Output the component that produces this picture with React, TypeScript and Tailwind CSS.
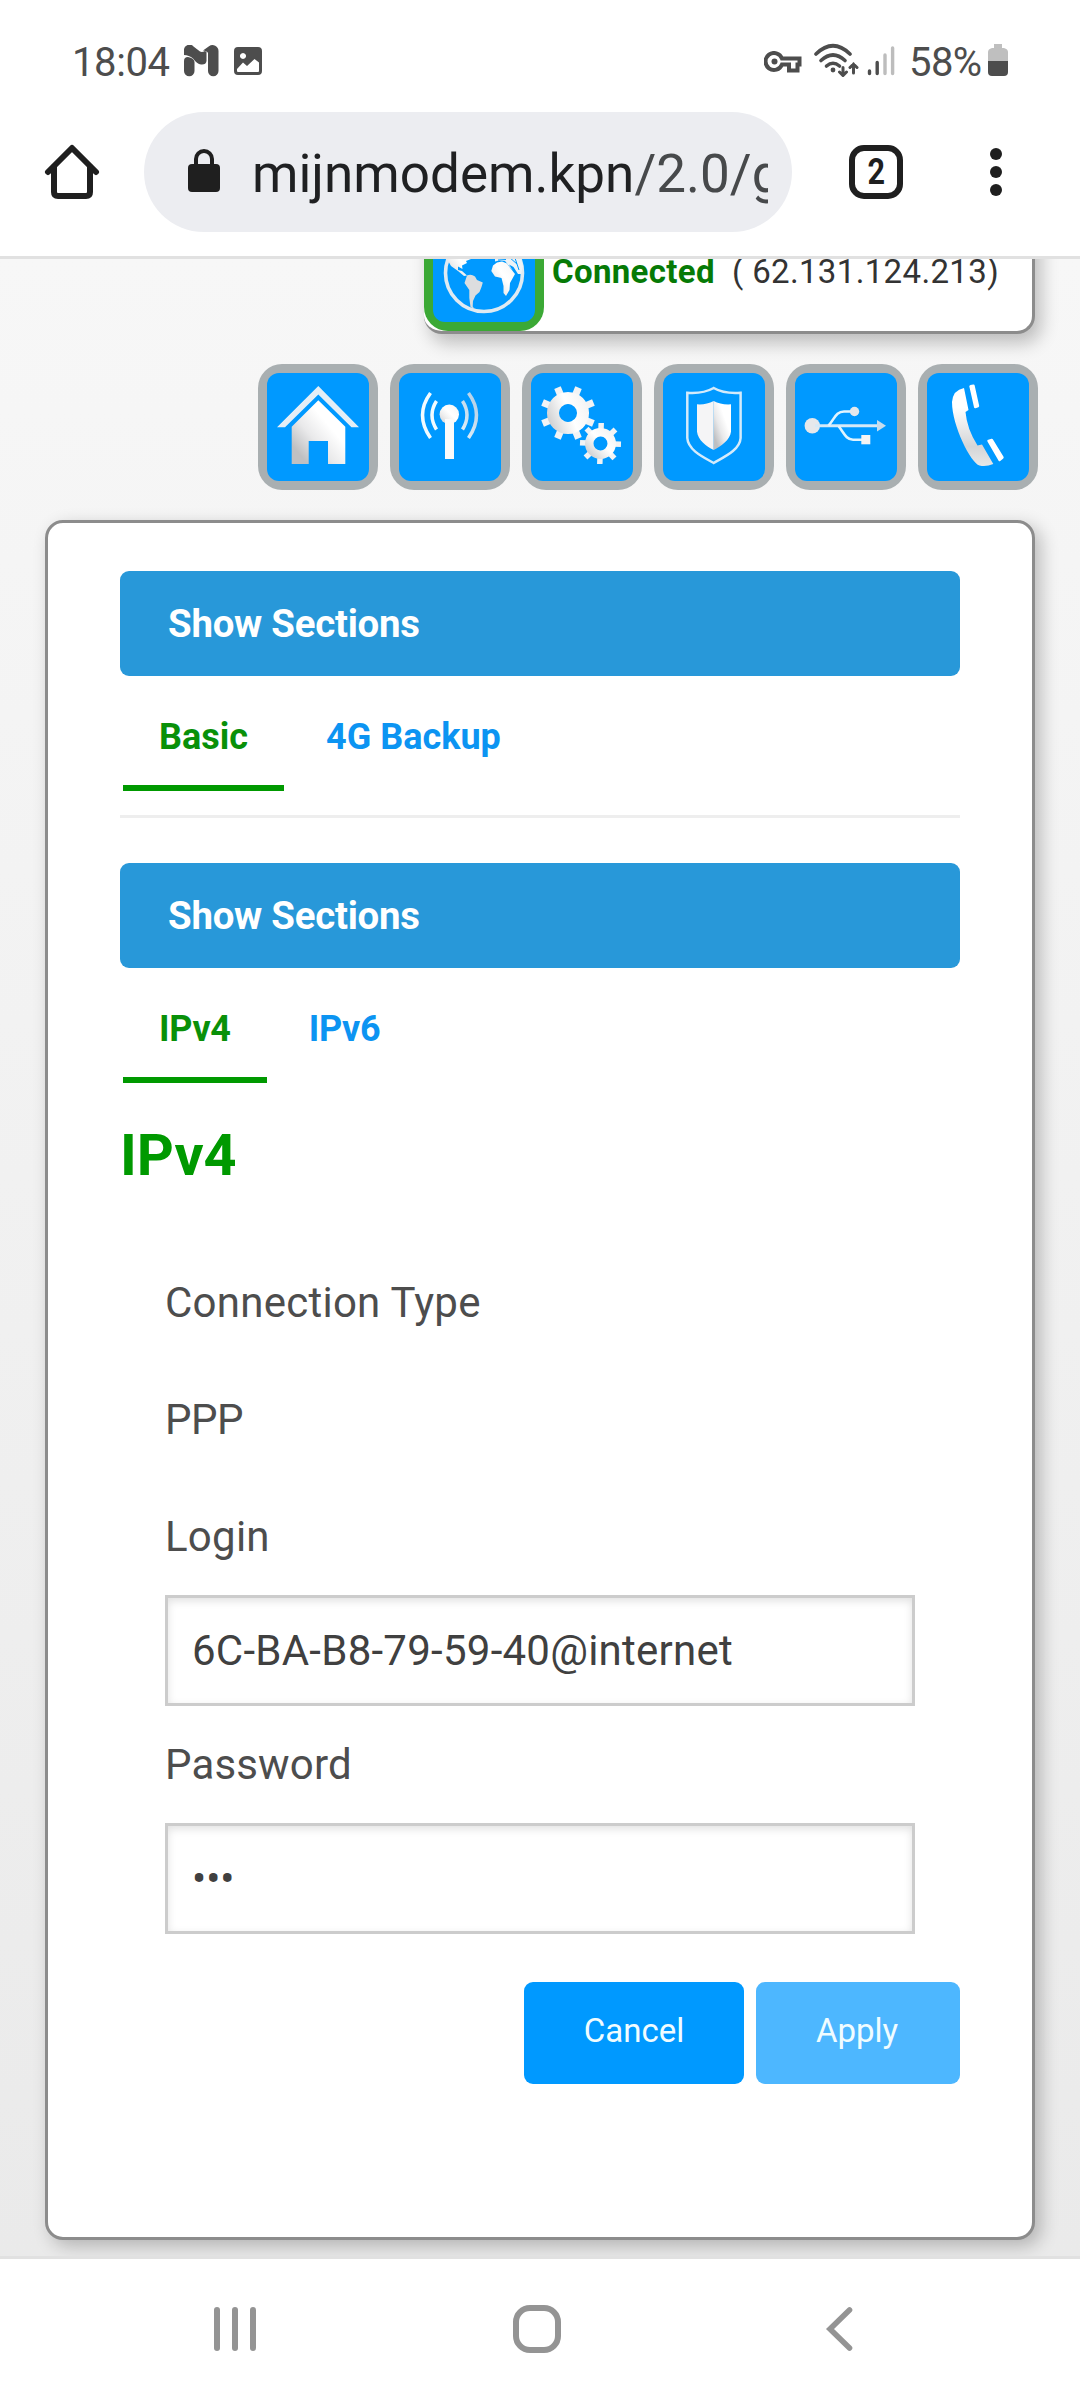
import clsx from "clsx";
import type { ReactNode } from "react";

type Tab = { label: string; active?: boolean };

function StatusBar() {
    return (
        <div className="flex h-[88px] items-start justify-between pl-[72px] pr-[72px] text-[#4d4d4d]">
            <div className="flex h-[88px] items-start">
                <span className="mt-[39px] w-[112px] text-[40px] leading-[48px] tracking-[-0.4px]">18:04</span>
                <svg className="mt-[45px]" width="36" height="32" viewBox="0 0 36 32" fill="currentColor">
                    <path d="M0 16Q0 12 4 12Q10 13 10.500 17V26A5.200 5.200 0 0 1 0 26Z" />
                    <path d="M0 10V6A5.500 5.500 0 0 1 9.500 1.500L16 6.500Q18 7.500 21 6L22.500 7V16Q22 20 17 19.500Q13 19 9 13.500Q5 10 0 10Z" />
                    <path d="M19 5.500L25 1.200A6 6 0 0 1 34.500 6V26A5.200 5.200 0 0 1 24 26V8Q23 6 19 5.500Z" />
                </svg>
                <svg className="ml-[14px] mt-[47px]" width="28" height="28" viewBox="0 0 28 28">
                    <path
                        fill="currentColor"
                        fillRule="evenodd"
                        d="M4 0H24Q28 0 28 4V24Q28 28 24 28H4Q0 28 0 24V4Q0 0 4 0ZM3 22V24Q3 25 4 25H24Q25 25 25 24V15.500L20.500 12L13 19L9 15.500ZM9 6A3 3 0 1 0 9.010 6Z"
                    />
                </svg>
            </div>
            <div className="flex h-[88px] items-start">
                <svg className="mt-[51px]" width="38" height="22" viewBox="0 0 38 22" fill="none" stroke="currentColor" strokeWidth="4">
                    <path d="M18 7.500H35.500V13.500H33.500V19.500H25V13.500H18A8.500 8.500 0 1 1 18 7.500Z" />
                    <circle cx="10.500" cy="10.500" r="3" fill="currentColor" stroke="none" />
                </svg>
                <svg className="ml-[12px] mt-[43px]" width="45" height="34" viewBox="0 0 45 34" fill="none" stroke="currentColor" strokeWidth="3.600" strokeLinecap="round">
                    <path d="M2 11Q19 -5.500 36 11" />
                    <path d="M7 17.500Q19 6.500 31 17.500" />
                    <path d="M12.500 23Q19 17.500 25.500 23" />
                    <circle cx="19" cy="27" r="2.400" fill="currentColor" stroke="none" />
                    <path d="M29 24.500V32M25.500 29L29 32.500L32.500 29" strokeWidth="3" />
                    <path d="M39.500 30V21M36 24.500L39.500 21L43 24.500" strokeWidth="3" />
                </svg>
                <svg className="ml-[8px] mt-[45px]" width="28" height="31" viewBox="0 0 28 31" strokeWidth="3.400" strokeLinecap="round">
                    <path d="M2.500 26V28.500M10.200 17.500V28.500" stroke="#4d4d4d" />
                    <path d="M18 10V28.500M25.600 3V28.500" stroke="#bdbdbd" />
                </svg>
                <span className="ml-[14px] mt-[39px] w-[79px] whitespace-nowrap text-[40px] leading-[48px] tracking-[-0.6px]">58%</span>
                <svg className="mt-[44px]" width="20" height="32" viewBox="0 0 20 32">
                    <path d="M6 0H14V4H16Q20 5 20 8V17H0V8Q0 5 4 4H6Z" fill="#bfbfbf" />
                    <path d="M0 17H20V28Q20 32 16 32H4Q0 32 0 28Z" fill="#4d4d4d" />
                </svg>
            </div>
        </div>
    );
}

function AddressBar() {
    return (
        <div className="flex h-[168px] items-start pl-[44px] text-[#1f1f1f]">
            <svg className="mt-[56px]" width="56" height="56" viewBox="0 0 56 56" fill="none" stroke="currentColor" strokeWidth="6" strokeLinecap="round" strokeLinejoin="round">
                <path d="M4 28L28 4L52 28" />
                <path d="M10 23V48Q10 52 14 52H42Q46 52 46 48V23" />
            </svg>
            <div className="ml-[44px] mt-[24px] flex h-[120px] w-[648px] rounded-full bg-[#ecedf1]">
                <svg className="ml-[44px] mt-[37px]" width="32" height="43" viewBox="0 0 32 43">
                    <path d="M8 16V10A8 8 0 0 1 24 10V16" fill="none" stroke="currentColor" strokeWidth="4" />
                    <rect y="15" width="32" height="28" rx="4" fill="currentColor" />
                </svg>
                <div className="ml-[32px] mt-[31px] w-[516px] overflow-hidden whitespace-nowrap text-[53px] leading-[62px] text-[#1f2022]">
                    mijnmodem.kpn<span className="text-[#47494b]">/2.0/g</span>
                </div>
            </div>
            <div className="ml-[57px] mt-[57px] flex h-[54px] w-[54px] items-center justify-center rounded-[15px] border-[6px] border-[#1f1f1f] text-[36px] leading-none font-bold">
                <span className="scale-x-85">2</span>
            </div>
            <div className="ml-[87px] mt-[60px] flex flex-col gap-1.5">
                {[0, 1, 2].map((dot) => (
                    <span key={dot} className="h-3 w-3 rounded-full bg-[#1f1f1f]" />
                ))}
            </div>
        </div>
    );
}

function Gear({ x, y, body, outer, hole, tooth, turn }: { x: number; y: number; body: number; outer: number; hole: number; tooth: number; turn: number }) {
    return (
        <g transform={`translate(${x} ${y}) rotate(${turn})`}>
            {[0, 45, 90, 135, 180, 225, 270, 315].map((angle) => (
                <rect key={angle} x={-tooth / 2} y={-outer} width={tooth} height={outer - body + 3} transform={`rotate(${angle})`} fill="#f1f3f5" />
            ))}
            <circle r={(body + hole) / 2} fill="none" stroke="url(#silver)" strokeWidth={body - hole} />
        </g>
    );
}

function IconTile({ children, connected }: { children: ReactNode; connected?: boolean }) {
    return (
        <div className={clsx("h-[126px] w-[120px] shrink-0 overflow-hidden rounded-[24px] p-[9px]", connected ? "bg-[#3ba935]" : "bg-[#a9afb1]")}>
            <svg className="rounded-[12px] bg-[#0099ff]" width="102" height="108" viewBox="0 0 102 108" fill="url(#silver)">
                {children}
            </svg>
        </div>
    );
}

function Gradients() {
    return (
        <svg className="absolute h-0 w-0">
            <defs>
                <linearGradient id="silver" x1="1" y1="0" x2="0" y2="1">
                    <stop offset="0" stopColor="#f4f4f4" />
                    <stop offset="0.450" stopColor="#ffffff" />
                    <stop offset="0.650" stopColor="#f0f0f0" />
                    <stop offset="1" stopColor="#cfd0d2" />
                </linearGradient>
                <linearGradient id="house" x1="1" y1="0" x2="0" y2="1">
                    <stop offset="0.350" stopColor="#ffffff" />
                    <stop offset="0.600" stopColor="#e9e9ea" />
                    <stop offset="0.850" stopColor="#bfc0c2" />
                </linearGradient>
                <linearGradient id="handset" x1="0" y1="0" x2="0" y2="1">
                    <stop offset="0.250" stopColor="#ffffff" />
                    <stop offset="0.750" stopColor="#d4d5d7" />
                    <stop offset="1" stopColor="#e8e8e8" />
                </linearGradient>
                <linearGradient id="waves" gradientUnits="userSpaceOnUse" x1="22" y1="60" x2="80" y2="30">
                    <stop offset="0.400" stopColor="#f2fbff" />
                    <stop offset="1" stopColor="#b4cfe6" />
                </linearGradient>
            </defs>
        </svg>
    );
}

function ConnectionStatus() {
    return (
        <div className="-mt-[54px] ml-[424px] flex h-[129px] w-[611px] shrink-0 rounded-[18px] border-r-[3px] border-b-[3px] border-[#8c8c8c] bg-white shadow-[6px_9px_18px_rgba(0,0,0,0.24)]">
            <IconTile connected>
                <circle cx="51" cy="59" r="38.500" fill="none" stroke="#dfeaf2" strokeWidth="3.600" />
                <path d="M14 45L18 52L25 57L31 62L34 61.500L29 57L25 56L25 52.500L29.500 55L29 51.500L34 49L33 47L38 45L37 34H20Z" />
                <path d="M34 61.500Q38 59.500 42 62.500L44 66L49.800 68.500L48.500 73L46.500 78L42.500 81.500L40 87L39.700 92.500L41.500 95L37.500 93L36.300 84V76L31.500 69Z" fill="#dcdddf" />
                <path d="M64 48.500L69 47.500L74 49.500L78 55L82 60L77 69L76.500 76L73 82L70.500 79L70.500 72L68.500 64L62 62.500L58.300 57L60 51.500Z" />
                <path d="M62 34H85L90 52L88 60L85 60L80.500 53L76 50.500L80 57L76 52L72 47L66 46.500L62 47.500Z" fill="#eef3f6" />
                <path d="M65 46L73 45.500M76 43L84 50M82 44L86 56" stroke="#0099ff" strokeWidth="1" />
            </IconTile>
            <div className="mt-[47px] ml-[8px] whitespace-nowrap text-[33px] leading-[40px] tracking-[0.35px] text-[#333]">
                <span className="font-bold text-[#067a06]">Connected</span>
                <span className="ml-[17px]">( 62.131.124.213)</span>
            </div>
        </div>
    );
}

function IconMenu() {
    return (
        <div className="mt-[30px] ml-[258px] flex gap-3">
            <IconTile>
                <path d="M51.300 13L92 54.300H84.500L51.300 21.500L18 54.300H10Z" fill="#e4eef6" />
                <path d="M51.300 27.300L78.300 53.700V91H61V68H41.700V91H24.700V53.700Z" fill="url(#house)" />
            </IconTile>
            <IconTile>
                <circle cx="50.300" cy="41.300" r="9.700" />
                <rect x="46" y="46" width="9" height="40" fill="#fafafa" />
                <g fill="none" stroke="url(#waves)" strokeWidth="3.500">
                    <path d="M31.500 20Q15.500 42 31.500 65" />
                    <path d="M37.500 28Q28.500 42 37.500 56.500" />
                    <path d="M63.500 28Q72.500 42 63.500 56.500" />
                    <path d="M69.500 20Q85.500 42 69.500 65" />
                </g>
            </IconTile>
            <IconTile>
                <Gear x={37} y={40} body={21} outer={27.5} hole={9} tooth={7} turn={22.5} />
                <Gear x={69.5} y={70.5} body={15.5} outer={20.5} hole={7} tooth={5.5} turn={2} />
            </IconTile>
            <IconTile>
                <path d="M50.700 15Q40 21 24.300 19.800V65C25 77 40 84 50.700 90C61 84 77 77 77.600 65V19.800Q61 21 50.700 15Z" fill="none" stroke="#d4ebfb" strokeWidth="2.500" />
                <path d="M50.700 28Q43 32 34 31.300V58.700C35 67 43 73 50.700 77Z" fill="#f5f5f6" />
                <path d="M50.700 28Q58 32 68 31.300V58.700C67 67 58 73 50.700 77Z" fill="url(#house)" />
            </IconTile>
            <IconTile>
                <circle cx="17.300" cy="52.700" r="7.700" fill="#e6e8eb" />
                <path d="M20 52.700H83" stroke="#d5e9f7" strokeWidth="3" />
                <path d="M82 47L91 52.700L82 58.500Z" fill="#c7dcec" />
                <path d="M33.500 52.700C40 45 41 38.500 49 38.500H56" fill="none" stroke="#e0f4ff" strokeWidth="2.600" />
                <circle cx="59.500" cy="38.500" r="4.700" fill="#e4e8ec" />
                <path d="M43.500 53C49 60 51 66.700 58 66.700H67" fill="none" stroke="#e0f4ff" strokeWidth="2.600" />
                <rect x="66.300" y="62" width="9" height="9.300" fill="#f4f4f4" />
            </IconTile>
            <IconTile>
                <path d="M37 15L41.500 37L38.500 39Q40 56 50.500 72.500L55 71.500L66.300 91Q59 94 52.500 92.500C44 90 25 53 25 29Q26 17 37 15Z" fill="url(#handset)" />
                <path d="M43.500 13.300L46.500 12.700L51 33L48.200 34Z M61.500 67.800L64.800 67L75.500 84.500L72.500 87Z" fill="#fff" stroke="#fff" strokeWidth="2.400" strokeLinejoin="round" />
            </IconTile>
        </div>
    );
}

function SectionsButton({ className }: { className?: string }) {
    return (
        <button
            className={clsx(
                "block h-[105px] w-full rounded-[9px] bg-[#2898d9] pl-[48px] text-left text-[38.4px] leading-[105px] font-bold tracking-[-0.25px] text-white",
                className
            )}
        >
            Show Sections
        </button>
    );
}

function Tabs({ tabs }: { tabs: Tab[] }) {
    return (
        <div className="flex h-[115px] gap-1.5 pl-[3px] text-[36px] leading-[48px] font-bold">
            {tabs.map((tab) => (
                <div
                    key={tab.label}
                    className={clsx(
                        "h-[115px] border-b-[6px] px-[36px] pt-[37px]",
                        tab.label.startsWith("IP") && "tracking-[-0.3px]",
                        tab.active ? "border-[#009900] text-[#099009]" : "border-transparent text-[#0c94f2]"
                    )}
                >
                    {tab.label}
                </div>
            ))}
        </div>
    );
}

function MainPanel() {
    return (
        <div className="mt-[30px] ml-[45px] h-[1720px] w-[990px] shrink-0 rounded-[18px] border-[3px] border-[#8c8c8c] bg-white px-[72px] pt-[48px] shadow-[6px_6px_18px_rgba(0,0,0,0.24)]">
            <SectionsButton />
            <Tabs tabs={[{ label: "Basic", active: true }, { label: "4G Backup" }]} />
            <hr className="mt-6 border-t-[3px] border-[#eeeeee]" />
            <SectionsButton className="mt-[45px]" />
            <Tabs tabs={[{ label: "IPv4", active: true }, { label: "IPv6" }]} />
            <h2 className="mt-[37px] text-[57.6px] leading-[72px] font-bold text-[#009900]">IPv4</h2>
            <div className="mt-[81px] px-[45px] text-[42px] text-[#4d4d4d]">
                <p className="leading-[60px] tracking-[0.25px]">Connection Type</p>
                <p className="mt-[57px] leading-[60px] tracking-[-0.5px]">PPP</p>
                <label className="mt-[57px] block leading-[60px] tracking-[0.25px]">Login</label>
                <input
                    type="text"
                    defaultValue="6C-BA-B8-79-59-40@internet"
                    className="mt-[28px] block h-[111px] w-[750px] border-[3px] border-[#cccccc] px-[24px] tracking-[0.25px] text-[#404040] shadow-[inset_0_3px_9px_rgba(0,0,0,0.12)]"
                />
                <label className="mt-[29px] block leading-[60px] tracking-[0.15px]">Password</label>
                <input
                    type="password"
                    defaultValue="ppp"
                    className="mt-[28px] block h-[111px] w-[750px] border-[3px] border-[#cccccc] px-[24px] text-[#404040] shadow-[inset_0_3px_9px_rgba(0,0,0,0.12)]"
                />
            </div>
            <div className="mt-[48px] flex justify-end gap-3 text-[33px] leading-[38px] text-[#f0fcff]">
                <button className="h-[102px] w-[220px] rounded-[9px] bg-[#0099ff] pb-1">Cancel</button>
                <button className="h-[102px] w-[204px] rounded-[9px] bg-[#4db7ff] pr-0.5 pb-1">Apply</button>
            </div>
        </div>
    );
}

function NavigationBar() {
    return (
        <div className="flex h-[141px] items-start bg-white text-[#949494]">
            <div className="mt-[48px] ml-[214px] flex gap-3">
                {[0, 1, 2].map((bar) => (
                    <span key={bar} className="h-[44px] w-[6px] rounded-full bg-[#949494]" />
                ))}
            </div>
            <div className="mt-[46px] ml-[257px] h-[48px] w-[48px] rounded-[17px] border-[6px] border-[#949494]" />
            <svg className="mt-[48px] ml-[264px]" width="28" height="44" viewBox="0 0 28 44" fill="none" stroke="currentColor" strokeWidth="5.600" strokeLinecap="round">
                <path d="M24.500 3L5 22L24.500 41" />
            </svg>
        </div>
    );
}

export default function App() {
    return (
        <div className="flex h-[2400px] w-[1080px] flex-col overflow-hidden bg-white font-[Roboto,sans-serif]">
            <Gradients />
            <StatusBar />
            <AddressBar />
            <div className="flex h-[2003px] flex-col overflow-hidden border-y-[3px] border-[#e1e1e1] bg-linear-to-b from-[#f7f7f7] to-[#eaeaea]">
                <ConnectionStatus />
                <IconMenu />
                <MainPanel />
            </div>
            <NavigationBar />
        </div>
    );
}
